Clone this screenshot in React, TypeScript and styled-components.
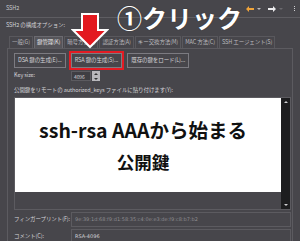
import React from "react";
import styled, { createGlobalStyle } from "styled-components";

const Global = createGlobalStyle`
  html, body { margin: 0; padding: 0; background: #47464b; overflow: hidden; }
  #root { width: 300px; height: 241px; }
`;

const Root = styled.div`
  position: relative;
  width: 300px;
  height: 241px;
  overflow: hidden;
  display: flex;
  flex-direction: column;
  background: #47464b;
  color: #d4d3d7;
  font-family: "Noto Sans CJK JP", "Noto Sans", sans-serif;
  font-size: 5.5px;
  line-height: 1;
  letter-spacing: -0.1px;
`;

const TitleBar = styled.div`
  height: 17px;
  flex: none;
  display: flex;
  align-items: center;
  padding: 0 5px 0 6px;
  border-bottom: 1px solid #5e5d62;
`;

const Title = styled.span`
  color: #c9c8cc;
`;

const NavIcons = styled.div`
  margin-left: auto;
  display: flex;
  align-items: center;
  gap: 3px;
`;

const Caret = styled.span<{ $dim?: boolean }>`
  width: 0;
  height: 0;
  border-left: 2px solid transparent;
  border-right: 2px solid transparent;
  border-top: 2px solid ${(p) => (p.$dim ? "#6a696e" : "#bdbcc0")};
  margin-right: 4px;
`;

const Dots = styled.span`
  margin-left: 4px;
  display: flex;
  flex-direction: column;
  gap: 1px;
  & > i { width: 1px; height: 1px; background: #cfcfd2; display: block; }
`;

const OptionsLabel = styled.div`
  padding: 3px 6px 0 6px;
  height: 13px;
  line-height: 8px;
  flex: none;
`;

const Tabs = styled.div`
  display: flex;
  padding-left: 9px;
  margin-top: 2px;
  height: 12px;
  flex: none;
`;

const Tab = styled.div<{ $active?: boolean }>`
  border: 1px solid ${(p) => (p.$active ? "#6b6a70" : "#59585d")};
  border-bottom: none;
  padding: 0 2px;
  line-height: 10px;
  margin-right: 1px;
  white-space: nowrap;
  background: ${(p) => (p.$active ? "#56555a" : "transparent")};
  color: ${(p) => (p.$active ? "#e4e4e6" : "#bcbbbf")};
`;

const Panel = styled.div`
  flex: 1;
  margin: 0 7px;
  border: 1px solid #5c5b60;
  border-bottom: none;
  padding: 4px 1px 0 6px;
  display: flex;
  flex-direction: column;
`;

const ButtonRow = styled.div`
  display: flex;
  gap: 5px;
  height: 15px;
`;

const Button = styled.div<{ $marked?: boolean }>`
  height: 15px;
  box-sizing: border-box;
  border: 1px solid #7c7b81;
  padding: 0 3px;
  display: flex;
  align-items: center;
  white-space: nowrap;
  color: #d4d3d7;
  outline: ${(p) => (p.$marked ? "2px solid #e31b23" : "none")};
  outline-offset: 0px;
`;

const KeyRow = styled.div`
  margin-top: 3px;
  display: flex;
  align-items: center;
  height: 10px;
`;

const RowLabel = styled.div`
  width: 57px;
  flex: none;
  white-space: nowrap;
`;

const SpinInput = styled.div`
  width: 20px;
  height: 10px;
  box-sizing: border-box;
  border: 1px solid #5c5b60;
  background: #3f3e43;
  display: flex;
  align-items: center;
  padding-left: 2px;
  font-size: 5px;
`;

const SpinArrows = styled.div`
  width: 8px;
  height: 10px;
  margin-left: 1px;
  background: #b9b8bc;
  display: flex;
  flex-direction: column;
  align-items: center;
  justify-content: space-around;
`;

const Tri = styled.span<{ $down?: boolean }>`
  width: 0;
  height: 0;
  border-left: 2px solid transparent;
  border-right: 2px solid transparent;
  ${(p) =>
    p.$down ? "border-top: 2px solid #333;" : "border-bottom: 2px solid #333;"}
`;

const HintLabel = styled.div`
  margin-top: 7px;
  height: 8px;
  white-space: nowrap;
`;

const TextBox = styled.div`
  margin-top: 1px;
  height: 113px;
  box-sizing: border-box;
  border: 1px solid #5c5b60;
  display: flex;
`;

const TextCol = styled.div`
  flex: 1;
  display: flex;
  flex-direction: column;
`;

const WhiteArea = styled.div`
  height: 94px;
  background: #ffffff;
  display: flex;
  flex-direction: column;
  align-items: center;
  padding-right: 10px;
  color: #111;
  font-weight: 700;
  letter-spacing: 0;
`;

const BigLine = styled.div<{ $size: number; $top: number }>`
  font-size: ${(p) => p.$size}px;
  margin-top: ${(p) => p.$top}px;
  line-height: 1;
  white-space: nowrap;
`;

const ScrollBar = styled.div`
  width: 9px;
  background: #1d1d1f;
  display: flex;
  flex-direction: column;
  justify-content: space-between;
  align-items: center;
  padding: 3px 0;
`;

const ScrollTri = styled.span<{ $down?: boolean }>`
  width: 0;
  height: 0;
  border-left: 2px solid transparent;
  border-right: 2px solid transparent;
  ${(p) =>
    p.$down ? "border-top: 2px solid #cfcfd2;" : "border-bottom: 2px solid #cfcfd2;"}
`;

const FieldRow = styled.div`
  margin-top: 2px;
  display: flex;
  align-items: center;
  height: 15px;
`;

const Field = styled.div<{ $muted?: boolean }>`
  flex: 1;
  height: 15px;
  box-sizing: border-box;
  border: 1px solid #5c5b60;
  display: flex;
  align-items: center;
  padding-left: 3px;
  white-space: nowrap;
  overflow: hidden;
  color: ${(p) => (p.$muted ? "#8e8d92" : "#d4d3d7")};
  font-family: "DejaVu Sans", sans-serif;
  font-size: 5px;
  letter-spacing: 0;
`;

const ArrowOverlay = styled.svg`
  position: absolute;
  left: 71px;
  top: 12px;
`;

const ClickLabel = styled.div`
  position: absolute;
  left: 117px;
  top: 4px;
  font-size: 25px;
  font-weight: 700;
  color: #ffffff;
  white-space: nowrap;
  line-height: 1.1;
  letter-spacing: 0;
  text-shadow: 0 0 1px #222;
`;

export default function App() {
  return (
    <>
      <Global />
      <Root>
        <TitleBar>
          <Title>SSH2</Title>
          <NavIcons>
            <svg width="8" height="6" viewBox="0 0 8 6">
              <path d="M0 3 L3 0 L3 2 L8 2 L8 4 L3 4 L3 6 Z" fill="#f0a43a" />
            </svg>
            <Caret />
            <svg width="8" height="6" viewBox="0 0 8 6">
              <path d="M8 3 L5 0 L5 2 L0 2 L0 4 L5 4 L5 6 Z" fill="#ececee" />
            </svg>
            <Caret $dim />
            <Dots>
              <i />
              <i />
              <i />
            </Dots>
          </NavIcons>
        </TitleBar>
        <OptionsLabel>SSH2 の構成オプション:</OptionsLabel>
        <Tabs>
          <Tab>一般(G)</Tab>
          <Tab $active>鍵管理(K)</Tab>
          <Tab>暗号方法(E)</Tab>
          <Tab>認証方法(A)</Tab>
          <Tab>キー交換方法(M)</Tab>
          <Tab>MAC 方法(C)</Tab>
          <Tab>SSH エージェント(S)</Tab>
        </Tabs>
        <Panel>
          <ButtonRow>
            <Button>DSA 鍵の生成(E)...</Button>
            <Button $marked>RSA 鍵の生成(S)...</Button>
            <Button>既存の鍵をロード(L)...</Button>
          </ButtonRow>
          <KeyRow>
            <RowLabel>Key size:</RowLabel>
            <SpinInput>4096</SpinInput>
            <SpinArrows>
              <Tri />
              <Tri $down />
            </SpinArrows>
          </KeyRow>
          <HintLabel>公開鍵をリモートの authorized_keys ファイルに貼り付けます(Y):</HintLabel>
          <TextBox>
            <TextCol>
              <WhiteArea>
                <BigLine $size={19.5} $top={22}>ssh-rsa AAAから始まる</BigLine>
                <BigLine $size={17.5} $top={13}>公開鍵</BigLine>
              </WhiteArea>
            </TextCol>
            <ScrollBar>
              <ScrollTri />
              <ScrollTri $down />
            </ScrollBar>
          </TextBox>
          <FieldRow>
            <RowLabel>フィンガープリント(F):</RowLabel>
            <Field $muted>9e:39:1d:68:f9:d1:58:35:c4:0e:e3:de:f9:c8:b7:b2</Field>
          </FieldRow>
          <FieldRow>
            <RowLabel>コメント(C):</RowLabel>
            <Field>RSA-4096</Field>
          </FieldRow>
        </Panel>
        <ArrowOverlay width="38" height="38" viewBox="0 0 38 38">
          <path
            d="M11 2 L27 2 L27 18 L36 18 L19 35 L2 18 L11 18 Z"
            fill="#e3191f"
            stroke="#ffffff"
            strokeWidth="2"
            strokeLinejoin="miter"
          />
        </ArrowOverlay>
        <ClickLabel>①クリック</ClickLabel>
      </Root>
    </>
  );
}
